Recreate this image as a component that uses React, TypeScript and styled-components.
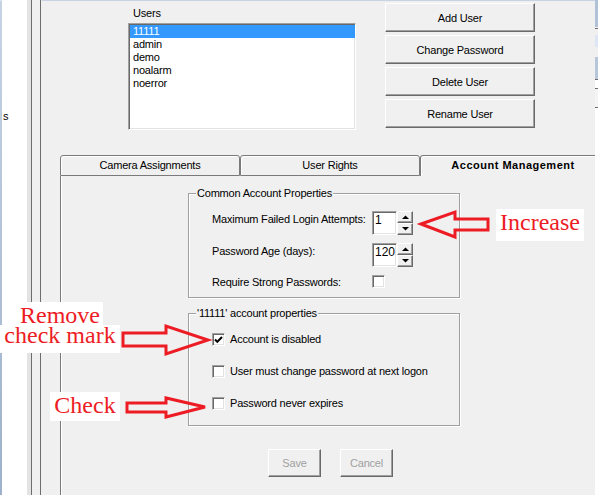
import styled, { createGlobalStyle, css } from 'styled-components';

const GlobalStyle = createGlobalStyle`
  html, body {
    margin: 0;
    padding: 0;
    background: #fff;
  }
  * {
    box-sizing: border-box;
  }
`;

const sunken = css`
  background: #fff;
  border: 1px solid;
  border-color: #a0a0a0 #fff #fff #a0a0a0;
  box-shadow: inset 1px 1px #696969, inset -1px -1px #e3e3e3;
`;

const raised = css`
  background: #f0f0f0;
  border: 1px solid;
  border-color: #fff #696969 #696969 #fff;
  box-shadow: inset -1px -1px #a0a0a0;
`;

const Root = styled.div`
  position: relative;
  width: 598px;
  height: 499px;
  background: #fff;
  overflow: hidden;
  font-family: "Liberation Sans", Arial, sans-serif;
  font-size: 11px;
  letter-spacing: -0.2px;
  color: #000;
`;

const Frame = styled.div`
  display: flex;
  height: 495px;
  background: #f0f0f0;
`;

const SideRail = styled.div`
  display: flex;
  flex-shrink: 0;
`;

const WindowEdge = styled.div`
  width: 2px;
  background: linear-gradient(#c6d3e4, #9db1ca);
  border-top-left-radius: 3px;
`;

const ListPane = styled.div`
  width: 25px;
  background: #fff;
  padding: 110px 0 0 1px;
  line-height: 13px;
  overflow: hidden;
`;

const Splitter = styled.div`
  width: 15px;
  display: flex;
  gap: 8px;
  padding-left: 4px;
  background: #f0f0f0;
  box-shadow: inset 4px 0 #e3e3e3;
`;

const SplitRule = styled.div`
  width: 1px;
  background: #6d6d6d;
`;

const Main = styled.div`
  flex: 1;
  min-width: 0;
  display: flex;
  flex-direction: column;
  overflow: hidden;
  box-shadow: inset 0 1px #c7d2e2;
`;

const TopSection = styled.div`
  height: 155px;
  flex-shrink: 0;
  display: flex;
  align-items: flex-start;
  gap: 29px;
  padding: 3px 0 0 86px;
`;

const UsersColumn = styled.div`
  width: 228px;
  display: flex;
  flex-direction: column;
  padding-top: 4px;
`;

const Caption = styled.div`
  line-height: 13px;
  padding-left: 5px;
`;

const ListBox = styled.div`
  ${sunken};
  margin-top: 3px;
  height: 107px;
  padding-top: 1px;
`;

const ListItem = styled.div<{ $selected?: boolean }>`
  height: 13px;
  line-height: 13px;
  margin-left: 1px;
  padding-left: 3px;
  background: ${(p) => (p.$selected ? '#3399ff' : 'transparent')};
  color: ${(p) => (p.$selected ? '#fff' : '#000')};
`;

const ButtonsColumn = styled.div`
  width: 150px;
  display: flex;
  flex-direction: column;
  gap: 3px;
`;

const PushButton = styled.button<{ $w?: number; $h?: number }>`
  ${raised};
  width: ${(p) => p.$w ?? 150}px;
  height: ${(p) => p.$h ?? 29}px;
  padding: 0;
  font: inherit;
  letter-spacing: inherit;
  color: #000;
  &:disabled {
    color: #a0a0a0;
  }
`;

const TabArea = styled.div`
  flex: 1;
  display: flex;
  flex-direction: column;
  padding-left: 18px;
`;

const TabStrip = styled.div`
  height: 21px;
  flex-shrink: 0;
  display: flex;
`;

const Tab = styled.div<{ $width: number; $active?: boolean }>`
  width: ${(p) => p.$width}px;
  flex-shrink: 0;
  border: 1px solid #7a7a7a;
  border-bottom-width: ${(p) => (p.$active ? 0 : 1)}px;
  border-radius: 3px 3px 0 0;
  box-shadow: inset 1px 1px #fff;
  text-align: center;
  line-height: 19px;
  font-weight: ${(p) => (p.$active ? 700 : 400)};
  letter-spacing: ${(p) => (p.$active ? '0.5px' : '-0.2px')};
`;

const TabPage = styled.div`
  flex: 1;
  display: flex;
  flex-direction: column;
  align-items: flex-start;
  border-left: 1px solid #7a7a7a;
  box-shadow: inset 1px 0 #fff;
  padding: 17px 0 0 127px;
`;

const GroupBox = styled.div<{ $height: number; $gapAbove?: number }>`
  width: 272px;
  height: ${(p) => p.$height}px;
  margin-top: ${(p) => p.$gapAbove ?? 0}px;
  display: flex;
  flex-direction: column;
  border: 1px solid #a0a0a0;
  box-shadow: inset 1px 1px #fff, 1px 1px #fff;
`;

const GroupLegend = styled.div`
  align-self: flex-start;
  margin: -7px 0 0 7px;
  padding: 0 1px;
  line-height: 13px;
  background: #f0f0f0;
`;

const GroupBody = styled.div<{ $top: number; $gap: number }>`
  display: flex;
  flex-direction: column;
  gap: ${(p) => p.$gap}px;
  margin-top: ${(p) => p.$top}px;
  padding-left: 23px;
`;

const PropRow = styled.div`
  display: flex;
  align-items: flex-start;
`;

const PropLabel = styled.div<{ $offset: number }>`
  width: 160px;
  padding-top: ${(p) => p.$offset}px;
  line-height: 13px;
`;

const SpinBox = styled.div`
  display: flex;
`;

const SpinEdit = styled.div`
  ${sunken};
  width: 25px;
  height: 24px;
  padding: 1px 0 0 2px;
  font-size: 12px;
  letter-spacing: 0;
  line-height: 14px;
`;

const SpinButtons = styled.div`
  width: 16px;
  display: flex;
  flex-direction: column;
`;

const SpinButton = styled.div`
  ${raised};
  height: 12px;
  display: flex;
  align-items: center;
  justify-content: center;
`;

const CheckRow = styled.div`
  display: flex;
  align-items: center;
  gap: 5px;
  height: 13px;
  line-height: 13px;
`;

const CheckBox = styled.div`
  ${sunken};
  width: 13px;
  height: 13px;
  flex-shrink: 0;
  display: flex;
  align-items: center;
  justify-content: center;
`;

const ActionRow = styled.div`
  display: flex;
  gap: 19px;
  margin-top: 23px;
  padding-left: 80px;
`;

const RightStrip = styled.div`
  width: 3px;
  flex-shrink: 0;
  display: flex;
  flex-direction: column;
  background: #fff;
`;

const StripBand = styled.div<{ $h: number; $bg: string }>`
  height: ${(p) => p.$h}px;
  background: ${(p) => p.$bg};
`;

const Annotations = styled.div`
  position: absolute;
  inset: 0;
  pointer-events: none;
`;

const ArrowLayer = styled.svg`
  position: absolute;
  left: 0;
  top: 0;
`;

const Callout = styled.div<{ $left: number; $top: number }>`
  position: absolute;
  left: ${(p) => p.$left}px;
  top: ${(p) => p.$top}px;
  display: flex;
  flex-direction: column;
  align-items: center;
  font-family: "Liberation Serif", "Times New Roman", serif;
  font-size: 24px;
  letter-spacing: 0;
  color: #ed1c24;
`;

const CalloutLine = styled.div<{ $w: number; $h: number; $lh: number; $pt?: number }>`
  width: ${(p) => p.$w}px;
  height: ${(p) => p.$h}px;
  padding-top: ${(p) => p.$pt ?? 0}px;
  line-height: ${(p) => p.$lh}px;
  text-align: center;
  white-space: nowrap;
  background: #fff;
`;

const users = ['11111', 'admin', 'demo', 'noalarm', 'noerror'];
const actions = ['Add User', 'Change Password', 'Delete User', 'Rename User'];

const strip: [number, string][] = [
  [27, '#b1c2d8'],
  [1, '#f0f0f0'],
  [1, '#6d6d6d'],
  [6, '#f0f0f0'],
  [12, '#dde6f4'],
  [10, '#f0f0f0'],
  [22, '#b7c7db'],
  [1, '#6d6d6d'],
  [8, '#fff'],
  [1, '#6d6d6d'],
  [18, '#f4f4f4'],
  [1, '#6d6d6d'],
];

function Spinner({ value }: { value: string }) {
  return (
    <SpinBox>
      <SpinEdit>{value}</SpinEdit>
      <SpinButtons>
        <SpinButton>
          <svg width="7" height="4" viewBox="0 0 7 4">
            <polygon points="0,4 3.5,0.5 7,4" fill="#000" />
          </svg>
        </SpinButton>
        <SpinButton>
          <svg width="7" height="4" viewBox="0 0 7 4">
            <polygon points="0,0 7,0 3.5,3.5" fill="#000" />
          </svg>
        </SpinButton>
      </SpinButtons>
    </SpinBox>
  );
}

function Check({ checked }: { checked?: boolean }) {
  return (
    <CheckBox>
      {checked && (
        <svg width="9" height="9" viewBox="0 0 9 9">
          <polyline points="1,4.5 3.3,6.8 8,2" fill="none" stroke="#000" strokeWidth="2" />
        </svg>
      )}
    </CheckBox>
  );
}

function App() {
  return (
    <Root>
      <GlobalStyle />
      <Frame>
        <SideRail>
          <WindowEdge />
          <ListPane>s</ListPane>
          <Splitter>
            <SplitRule />
            <SplitRule />
          </Splitter>
        </SideRail>

        <Main>
          <TopSection>
            <UsersColumn>
              <Caption>Users</Caption>
              <ListBox>
                {users.map((u, i) => (
                  <ListItem key={u} $selected={i === 0}>
                    {u}
                  </ListItem>
                ))}
              </ListBox>
            </UsersColumn>
            <ButtonsColumn>
              {actions.map((a) => (
                <PushButton key={a}>{a}</PushButton>
              ))}
            </ButtonsColumn>
          </TopSection>

          <TabArea>
            <TabStrip>
              <Tab $width={180}>Camera Assignments</Tab>
              <Tab $width={180}>User Rights</Tab>
              <Tab $width={186} $active>
                Account Management
              </Tab>
            </TabStrip>
            <TabPage>
              <GroupBox $height={105}>
                <GroupLegend>Common Account Properties</GroupLegend>
                <GroupBody $top={11} $gap={8}>
                  <PropRow>
                    <PropLabel $offset={2}>Maximum Failed Login Attempts:</PropLabel>
                    <Spinner value="1" />
                  </PropRow>
                  <PropRow>
                    <PropLabel $offset={2}>Password Age (days):</PropLabel>
                    <Spinner value="120" />
                  </PropRow>
                  <PropRow>
                    <PropLabel $offset={1}>Require Strong Passwords:</PropLabel>
                    <Check />
                  </PropRow>
                </GroupBody>
              </GroupBox>

              <GroupBox $height={113} $gapAbove={15}>
                <GroupLegend>'11111' account properties</GroupLegend>
                <GroupBody $top={13} $gap={19}>
                  <CheckRow>
                    <Check checked />
                    Account is disabled
                  </CheckRow>
                  <CheckRow>
                    <Check />
                    User must change password at next logon
                  </CheckRow>
                  <CheckRow>
                    <Check />
                    Password never expires
                  </CheckRow>
                </GroupBody>
              </GroupBox>

              <ActionRow>
                <PushButton $w={53} $h={28} disabled>
                  Save
                </PushButton>
                <PushButton $w={53} $h={28} disabled>
                  Cancel
                </PushButton>
              </ActionRow>
            </TabPage>
          </TabArea>
        </Main>

        <RightStrip>
          {strip.map(([h, bg], i) => (
            <StripBand key={i} $h={h} $bg={bg} />
          ))}
        </RightStrip>
      </Frame>

      <Annotations>
        <ArrowLayer width="598" height="499" viewBox="0 0 598 499">
          <g fill="none" stroke="#ed1c24" strokeWidth="3" strokeLinejoin="miter">
            <polygon points="421,224 455,212 455,219 488,219 488,230 455,230 455,237" />
            <polygon points="123,333 166,333 166,326 208,340 166,354 166,346 123,346" />
            <polygon points="127,403 166,403 166,398 205,407 166,417 166,412 127,412" />
          </g>
        </ArrowLayer>

        <Callout $left={496} $top={209}>
          <CalloutLine $w={88} $h={32} $lh={26}>
            Increase
          </CalloutLine>
        </Callout>

        <Callout $left={0} $top={302}>
          <CalloutLine $w={86} $h={23} $lh={20} $pt={3}>
            Remove
          </CalloutLine>
          <CalloutLine $w={120} $h={28} $lh={20}>
            check mark
          </CalloutLine>
        </Callout>

        <Callout $left={50} $top={392}>
          <CalloutLine $w={70} $h={29} $lh={26}>
            Check
          </CalloutLine>
        </Callout>
      </Annotations>
    </Root>
  );
}

export default App;
